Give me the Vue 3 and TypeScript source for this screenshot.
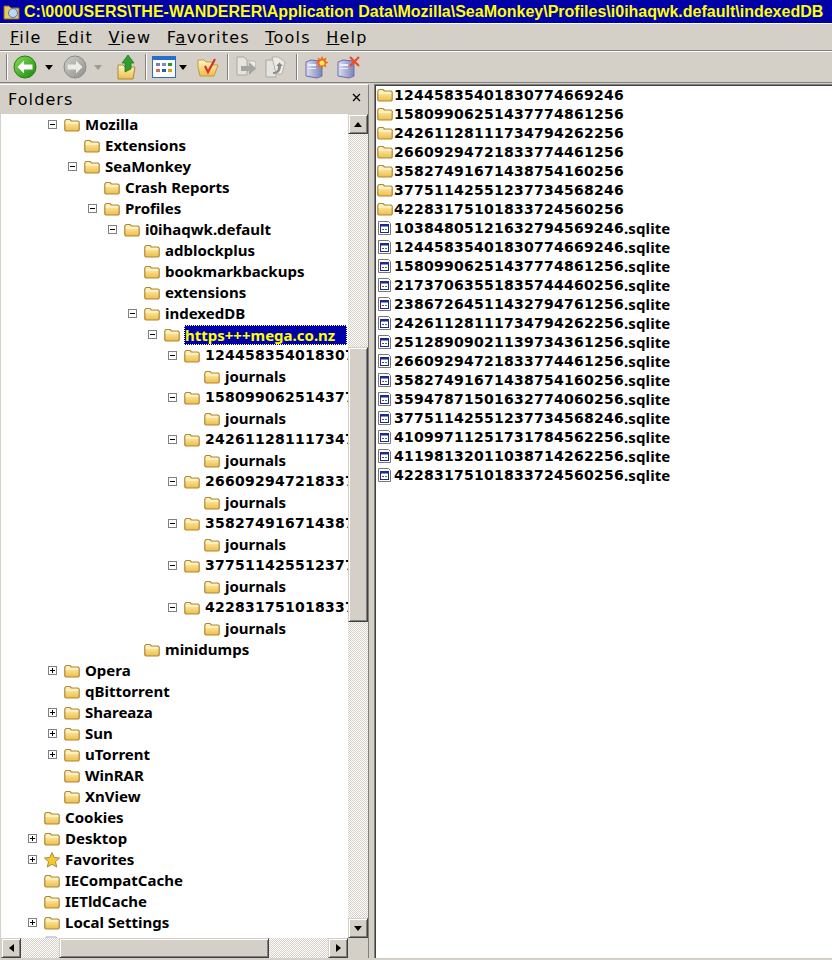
<script setup lang="ts">
type TreeRow = { name: string; depth: number; toggle?: "+" | "-"; icon?: "star" | "doc"; selected?: boolean };

const hashes = [
  "12445835401830774669246",
  "15809906251437774861256",
  "24261128111734794262256",
  "26609294721833774461256",
  "35827491671438754160256",
  "37751142551237734568246",
  "42283175101833724560256",
];

const tree: TreeRow[] = [
  { name: "Mozilla", depth: 2, toggle: "-" },
  { name: "Extensions", depth: 3 },
  { name: "SeaMonkey", depth: 3, toggle: "-" },
  { name: "Crash Reports", depth: 4 },
  { name: "Profiles", depth: 4, toggle: "-" },
  { name: "i0ihaqwk.default", depth: 5, toggle: "-" },
  { name: "adblockplus", depth: 6 },
  { name: "bookmarkbackups", depth: 6 },
  { name: "extensions", depth: 6 },
  { name: "indexedDB", depth: 6, toggle: "-" },
  { name: "https+++mega.co.nz", depth: 7, toggle: "-", selected: true },
  ...hashes.flatMap((h): TreeRow[] => [
    { name: h, depth: 8, toggle: "-" },
    { name: "journals", depth: 9 },
  ]),
  { name: "minidumps", depth: 6 },
  { name: "Opera", depth: 2, toggle: "+" },
  { name: "qBittorrent", depth: 2 },
  { name: "Shareaza", depth: 2, toggle: "+" },
  { name: "Sun", depth: 2, toggle: "+" },
  { name: "uTorrent", depth: 2, toggle: "+" },
  { name: "WinRAR", depth: 2 },
  { name: "XnView", depth: 2 },
  { name: "Cookies", depth: 1 },
  { name: "Desktop", depth: 1, toggle: "+" },
  { name: "Favorites", depth: 1, toggle: "+", icon: "star" },
  { name: "IECompatCache", depth: 1 },
  { name: "IETldCache", depth: 1 },
  { name: "Local Settings", depth: 1, toggle: "+" },
  { name: "", depth: 1, icon: "doc" },
];

const sqlite = [
  "10384805121632794569246",
  "12445835401830774669246",
  "15809906251437774861256",
  "21737063551835744460256",
  "23867264511432794761256",
  "24261128111734794262256",
  "25128909021139734361256",
  "26609294721833774461256",
  "35827491671438754160256",
  "35947871501632774060256",
  "37751142551237734568246",
  "41099711251731784562256",
  "41198132011038714262256",
  "42283175101833724560256",
];

const menus = [
  { before: "", key: "F", after: "ile" },
  { before: "", key: "E", after: "dit" },
  { before: "", key: "V", after: "iew" },
  { before: "F", key: "a", after: "vorites" },
  { before: "", key: "T", after: "ools" },
  { before: "", key: "H", after: "elp" },
];

const isNum = (s: string) => /^\d+$/.test(s);
</script>

<template>
  <div class="window">
    <svg class="defs" width="0" height="0">
      <defs>
        <linearGradient id="fold" x1="0" y1="0" x2="0" y2="1">
          <stop offset="0" stop-color="#fff6c4" />
          <stop offset="1" stop-color="#efbd48" />
        </linearGradient>
        <linearGradient id="green" x1="0" y1="0" x2="1" y2="1">
          <stop offset="0" stop-color="#86e050" />
          <stop offset="1" stop-color="#158a10" />
        </linearGradient>
        <linearGradient id="grey" x1="0" y1="0" x2="1" y2="1">
          <stop offset="0" stop-color="#cfcfcb" />
          <stop offset="1" stop-color="#8e8e8a" />
        </linearGradient>
        <linearGradient id="box" x1="0" y1="0" x2="1" y2="0">
          <stop offset="0" stop-color="#dcdef4" />
          <stop offset="1" stop-color="#7d82b8" />
        </linearGradient>
        <symbol id="folder" viewBox="0 0 16 16">
          <path d="M.8 4 2 2.500h4L7.500 4H14l1.200 1.300V13l-1 1H1.800l-1-1z" fill="url(#fold)" stroke="#ad8835" stroke-width="1.200" />
          <path d="M1.500 6h13" stroke="#fffbe4" />
        </symbol>
      </defs>
    </svg>

    <header class="title">
      <svg width="18" height="16" viewBox="0 0 18 16">
        <path d="M1 2h5l2 2h8v11H1z" fill="#e8c860" stroke="#8a6a20" />
        <circle cx="10" cy="9" r="4.500" fill="#bcd8f0" stroke="#5a7aa0" />
      </svg>
      <span>C:\000USERS\THE-WANDERER\Application Data\Mozilla\SeaMonkey\Profiles\i0ihaqwk.default\indexedDB</span>
    </header>

    <nav class="menubar">
      <span v-for="m in menus" :key="m.key + m.after" class="menu">{{ m.before }}<u>{{ m.key }}</u>{{ m.after }}</span>
    </nav>

    <div class="toolbar">
      <i class="grip"></i>
      <svg class="t-back" width="24" height="24" viewBox="0 0 24 24">
        <circle cx="12" cy="12" r="11" fill="url(#green)" stroke="#2c7a1c" />
        <path d="M4.500 12l6.500-6.500v4h8.500v5H11v4z" fill="#fff" />
      </svg>
      <i class="drop"></i>
      <svg class="t-fwd" width="24" height="24" viewBox="0 0 24 24">
        <circle cx="12" cy="12" r="11" fill="url(#grey)" stroke="#8c8c88" />
        <path d="M19.500 12L13 5.500v4H4.500v5H13v4z" fill="#ecebe6" />
      </svg>
      <i class="drop off"></i>
      <svg class="t-up" width="20" height="26" viewBox="0 0 20 26">
        <path d="M1 11h5l2 2h10l-2 12H1z" fill="url(#fold)" stroke="#a88a3c" />
        <path d="M8 18V9H5l6-8 6 8h-3v6z" fill="#2f9e2a" stroke="#1c6e1a" stroke-width=".7" />
      </svg>
      <i class="sep s1"></i>
      <svg class="t-views" width="24" height="22" viewBox="0 0 24 22">
        <rect x=".5" y=".5" width="23" height="21" fill="#fff" stroke="#2a6cc8" />
        <rect x="1" y="1" width="22" height="3" fill="#2a6cc8" />
        <path d="M4 7h4v3H4z" fill="#8878b0" /><path d="M10 7h4v3h-4z" fill="#7890c0" /><path d="M16 7h4v3h-4z" fill="#1f9a30" />
        <path d="M4 13h4v3H4z" fill="#d86a50" /><path d="M10 13h4v3h-4z" fill="#2060b0" /><path d="M16 13h4v3h-4z" fill="#d8a020" />
      </svg>
      <i class="drop"></i>
      <svg class="t-check" width="22" height="20" viewBox="0 0 22 20">
        <path d="M1 3h6l2 2h8l-1 3h5l-4 11H3L1 10z" fill="url(#fold)" stroke="#c09a40" />
        <path d="M8 9l3 6 7-13" fill="none" stroke="#e0302a" stroke-width="2.200" />
      </svg>
      <i class="sep s2"></i>
      <svg class="t-move" width="22" height="24" viewBox="0 0 22 24">
        <path d="M2 2h7l3 3v15H2z" fill="#e6e4de" stroke="#a8a8a2" />
        <path d="M13 6h6l2 2-1 7h-7z" fill="#ecebe6" stroke="#b8b8b2" />
        <path d="M6 11h8V7l7 6.500-7 6.500v-4H6z" fill="#a4a4a0" />
      </svg>
      <svg class="t-copy" width="22" height="24" viewBox="0 0 22 24">
        <path d="M2 5h7l3 3v14H2z" fill="#e6e4de" stroke="#a8a8a2" />
        <path d="M8 2h6l7 5-3 12h-6z" fill="#ecebe6" stroke="#b0b0aa" />
        <path d="M9 17c4 0 5-2 5-6h-2l3.500-3.500L19 11h-2c0 5-3 8-8 8z" fill="#8a8a86" />
      </svg>
      <i class="sep s3"></i>
      <svg class="t-new" width="24" height="24" viewBox="0 0 24 24">
        <path d="M1 7l5-2 11 1v15l-5 2-11-2z" fill="url(#box)" stroke="#6a6ea8" />
        <path d="M3 9h8v2H3zM3 13h8v1H3z" fill="#eef" />
        <path d="M17 1l1.500 3 3-1.500-1 3.500 3 1.500-3 1.500 1 3.500-3-1.500-1.500 3-1.500-3-3 1.500 1-3.500-3-1.500 3-1.500-1-3.500 3 1.500z" fill="#f06a18" />
        <circle cx="17" cy="8" r="2.500" fill="#ffe860" />
      </svg>
      <svg class="t-del" width="24" height="24" viewBox="0 0 24 24">
        <path d="M1 7l5-2 11 1v15l-5 2-11-2z" fill="url(#box)" stroke="#6a6ea8" />
        <path d="M3 9h8v2H3zM3 13h8v1H3z" fill="#eef" />
        <path d="M13 2l9 9M22 2l-9 9" stroke="#f04a20" stroke-width="2.200" />
      </svg>
    </div>

    <main class="body">
      <section class="folders">
        <div class="folders-head">
          <span>Folders</span>
          <svg width="9" height="9" viewBox="0 0 9 9"><path d="M1 1l7 7M8 1 1 8" stroke="#000" stroke-width="1.300" /></svg>
        </div>
        <div class="tree-wrap">
          <div class="tree-main">
            <div class="tree">
              <div
                v-for="(r, i) in tree"
                :key="i"
                class="row"
                :style="{ paddingLeft: (r.depth - 1) * 20 + 27 + 'px' }"
              >
                <span class="toggle" :class="{ empty: !r.toggle }">
                  <template v-if="r.toggle">
                    <i class="h"></i>
                    <i v-if="r.toggle === '+'" class="v"></i>
                  </template>
                </span>
                <svg v-if="r.icon === 'star'" class="ico" width="16" height="16" viewBox="0 0 16 16">
                  <path d="M8 .5l2.200 5L15.500 6l-4 3.700 1.200 5.300L8 12.300 3.300 15l1.200-5.300-4-3.700 5.300-.5z" fill="#f6c830" stroke="#a88a3c" />
                </svg>
                <svg v-else-if="r.icon === 'doc'" class="ico" width="16" height="16" viewBox="0 0 16 16">
                  <path d="M2 1h10l2 2v12H2z" fill="#fff" stroke="#9aa4c8" />
                </svg>
                <svg v-else class="ico" width="16" height="16"><use href="#folder" /></svg>
                <span class="label" :class="{ selected: r.selected, num: isNum(r.name) }">{{ r.name }}</span>
              </div>
            </div>
            <div class="vbar">
              <button class="sb"><i class="arr up"></i></button>
              <div class="track">
                <div class="vthumb"></div>
              </div>
              <button class="sb"><i class="arr down"></i></button>
            </div>
          </div>
          <div class="hrow">
            <div class="hbar">
              <button class="sb"><i class="arr left"></i></button>
              <div class="track htrack">
                <div class="hthumb"></div>
              </div>
              <button class="sb"><i class="arr right"></i></button>
            </div>
            <div class="corner"></div>
          </div>
        </div>
      </section>

      <section class="files">
        <div v-for="h in hashes" :key="h" class="file">
          <svg class="fico" width="16" height="16"><use href="#folder" /></svg>
          <span class="num">{{ h }}</span>
        </div>
        <div v-for="f in sqlite" :key="f" class="file">
          <svg class="fico" width="16" height="16" viewBox="0 0 16 16">
            <path d="M1.500 1.500h10l2 2v11h-12z" fill="#fff" stroke="#777" />
            <rect x="3.500" y="4.500" width="8" height="8" fill="#fff" stroke="#1a2a90" />
            <rect x="3" y="4" width="9" height="2.500" fill="#1a2a90" />
            <path d="M5 9.500h2" stroke="#a03030" />
            <path d="M8 9.500h2" stroke="#2a8a50" />
          </svg>
          <span class="num">{{ f }}</span><span class="ext">.sqlite</span>
        </div>
      </section>
    </main>
  </div>
</template>

<style scoped>
.defs{position:absolute}
.window{width:832px;height:960px;background:#d4d0c8;display:flex;flex-direction:column;overflow:hidden;font-family:"DejaVu Sans",sans-serif;color:#000}
.title{height:23px;background:#0000a8;color:#ff0;display:flex;align-items:center;gap:3px;padding-left:3px;font:bold 16px "Liberation Sans",sans-serif;white-space:nowrap;flex:none}
.menubar{height:26px;border-top:1px solid #fff;border-bottom:1px solid #808080;display:flex;align-items:center;padding-left:10px;font-size:16px;letter-spacing:1.2px;flex:none;box-sizing:content-box}
.menu{margin-right:15.500px}
.toolbar{height:30px;border-top:1px solid #fff;border-bottom:1px solid #808080;display:flex;align-items:center;flex:none;box-sizing:content-box}
.grip{width:1px;height:26px;background:#808080;border-right:1px solid #fff;margin-left:6px}
.drop{width:0;height:0;border:4.500px solid transparent;border-top:5px solid #000;border-bottom:0}
.drop.off{border-top-color:#9a9a96}
.sep{width:1px;height:26px;background:#808080;border-right:1px solid #fff}
.s1{margin-left:8px}
.t-back{margin-left:5px}
.t-back + .drop{margin-left:8px}
.t-fwd{margin-left:10px}
.t-fwd + .drop{margin-left:7px}
.t-up{margin-left:15px}
.t-views{margin-left:5px}
.t-views + .drop{margin-left:3px}
.t-check{margin-left:10px}
.s2{margin-left:8px}
.t-move{margin-left:6px}
.t-copy{margin-left:7px}
.s3{margin-left:10px}
.t-new{margin-left:7px}
.t-del{margin-left:8px}
.body{flex:1;min-height:0;display:flex;padding-top:1px;background:#d4d0c8}
.folders{width:369px;flex:none;display:flex;flex-direction:column;border-top:1px solid #fff;border-right:1px solid #808080;box-sizing:border-box;margin-bottom:2px}
.folders-head{height:29px;display:flex;align-items:center;justify-content:space-between;padding:0 7px 0 8px;font-size:16px;letter-spacing:1.1px;flex:none}
.folders-head svg{margin-top:-4px}
.tree-wrap{flex:1;min-height:0;display:flex;flex-direction:column;background:#fff;margin-left:1px}
.tree-main{flex:1;min-height:0;display:flex}
.tree{flex:1;min-width:0;overflow:hidden}
.row{height:21px;display:flex;align-items:center;white-space:nowrap;font:700 15px "Noto Sans",sans-serif}
.toggle{width:9px;height:9px;border:1px solid #808080;background:#fff;position:relative;flex:none;margin-right:7px;box-sizing:border-box}
.toggle.empty{border-color:transparent;background:none}
.toggle .h{position:absolute;left:1px;right:1px;top:3px;height:1px;background:#000}
.toggle .v{position:absolute;top:1px;bottom:1px;left:3px;width:1px;background:#000}
.ico{flex:none}
.label{margin-left:4px;padding:0 1px;line-height:19px;height:19px;flex:none}
.num{font:700 14px "DejaVu Sans",sans-serif;letter-spacing:.26px}
.label.num{line-height:19px}
.selected{background:#0000a8;color:#ff0;outline:1px dotted #fff;outline-offset:-1px;min-width:161px;height:20px;line-height:20px}
.vbar{width:20px;flex:none;display:flex;flex-direction:column}
.sb{width:20px;height:20px;padding:0;background:#d4d0c8;border:1px solid;border-color:#d4d0c8 #404040 #404040 #d4d0c8;box-shadow:inset 1px 1px 0 #fff,inset -1px -1px 0 #808080;display:flex;align-items:center;justify-content:center;flex:none}
.track{flex:1;min-height:0;background:conic-gradient(#fff 25%,#d4d0c8 0 50%,#fff 0 75%,#d4d0c8 0) 0 0/2px 2px}
.vbar .track{padding-top:213px}
.vthumb{height:275px;background:#d4d0c8;border:1px solid;border-color:#d4d0c8 #404040 #404040 #d4d0c8;box-shadow:inset 1px 1px 0 #fff,inset -1px -1px 0 #808080;box-sizing:border-box}
.hrow{height:20px;display:flex;flex:none}
.hbar{flex:1;display:flex;min-width:0}
.htrack{padding-left:38px}
.hthumb{width:210px;height:20px;background:#d4d0c8;border:1px solid;border-color:#d4d0c8 #404040 #404040 #d4d0c8;box-shadow:inset 1px 1px 0 #fff,inset -1px -1px 0 #808080;box-sizing:border-box}
.corner{width:20px;background:#d4d0c8}
.arr{width:0;height:0;display:block;border:4px solid transparent}
.arr.up{border-top:0;border-bottom:5px solid #000}
.arr.down{border-bottom:0;border-top:5px solid #000}
.arr.left{border-left:0;border-right:5px solid #000}
.arr.right{border-right:0;border-left:5px solid #000}
.files{flex:1;min-width:0;margin:0 0 2px 5px;background:#fff;border-top:1px solid #808080;border-left:1px solid #808080;box-shadow:inset 1px 1px 0 #404040;padding:0 0 0 2px}
.file{height:19px;display:flex;align-items:center;font:700 15px "Noto Sans",sans-serif;white-space:nowrap}
.ext{letter-spacing:.1px}
.fico{flex:none;margin-right:1px}
</style>
